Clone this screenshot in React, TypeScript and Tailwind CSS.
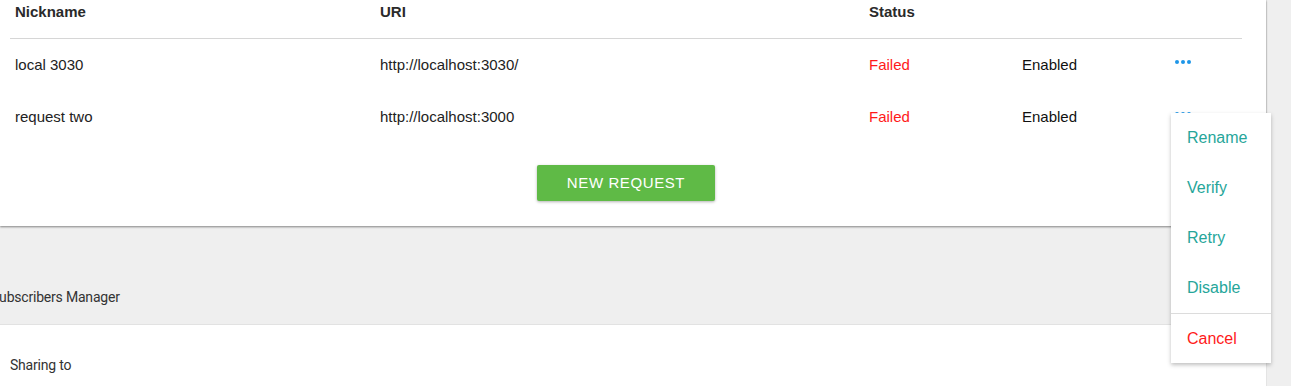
import React from "react";

const rows = [
  { name: "local 3030", uri: "http://localhost:3030/", status: "Failed", state: "Enabled" },
  { name: "request two", uri: "http://localhost:3000", status: "Failed", state: "Enabled" },
];

function Dots() {
  return (
    <div className="flex gap-[2px] items-center h-[6px]">
      <span className="w-[4px] h-[4px] rounded-full bg-[#1e96e8]" />
      <span className="w-[4px] h-[4px] rounded-full bg-[#1e96e8]" />
      <span className="w-[4px] h-[4px] rounded-full bg-[#1e96e8]" />
    </div>
  );
}

export default function App() {
  const cols = "grid grid-cols-[365px_489px_153px_153px_72px]";
  return (
    <div className="relative flex h-[386px] w-[1291px] overflow-hidden bg-white text-[15px] text-[#222]" style={{ fontFamily: '"Liberation Sans", Arial, sans-serif' }}>
      <div className="flex w-[1266px] flex-col">
        <div className="relative z-10 h-[226px] bg-white shadow-[0_1px_2px_rgba(0,0,0,0.45)]">
          <div className="ml-[10px] w-[1232px]">
            <div className={`${cols} h-[39px] border-b border-[#d6d6d6] pt-[3px] font-bold text-[#2a2a2a]`}>
              <div className="px-[5px] leading-[18px]">Nickname</div>
              <div className="px-[5px] leading-[18px]">URI</div>
              <div className="px-[5px] leading-[18px]">Status</div>
              <div />
              <div />
            </div>
            {rows.map((r) => (
              <div key={r.name} className={`${cols} h-[52px] items-center`}>
                <div className="px-[5px] pt-[1px]">{r.name}</div>
                <div className="px-[5px] pt-[1px]">{r.uri}</div>
                <div className="px-[5px] pt-[1px] text-[#ff1a1a]">{r.status}</div>
                <div className="px-[5px] pt-[1px] text-[#111]">{r.state}</div>
                <div className="px-[5px] pb-[7px]">
                  <Dots />
                </div>
              </div>
            ))}
            <div className="flex justify-center pt-[22px]">
              <button className="h-[36px] w-[178px] rounded-[2px] bg-[#5fba46] text-[15px] tracking-[0.6px] text-white shadow-[0_1px_3px_rgba(0,0,0,0.3)]">
                NEW REQUEST
              </button>
            </div>
          </div>
        </div>
        <div className="flex h-[99px] items-end border-b border-[#e2e2e2] bg-[#efefef] pb-[16px]">
          <span className="-ml-[9px] text-[14px] tracking-[-0.2px] text-[#333]" style={{ fontFamily: 'Roboto, "Liberation Sans", sans-serif' }}>
            Subscribers Manager
          </span>
        </div>
        <div className="flex-1 bg-white pl-[10px] pt-[29px]">
          <span className="text-[14px] tracking-[-0.2px] text-[#333]" style={{ fontFamily: 'Roboto, "Liberation Sans", sans-serif' }}>
            Sharing to
          </span>
        </div>
      </div>
      <div className="flex-1 border-l border-[#e4e4e4] bg-[#efefef]" />

      <div className="absolute left-[1171px] top-[113px] z-20 w-[100px] bg-white text-[16px] shadow-[0_2px_4px_rgba(0,0,0,0.25)]">
        {["Rename", "Verify", "Retry", "Disable"].map((t) => (
          <div key={t} className="flex h-[50px] items-center px-[16px] text-[#26a69a]">
            {t}
          </div>
        ))}
        <div className="h-[1px] bg-[#dcdcdc]" />
        <div className="flex h-[49px] items-center px-[16px] text-[#ff1a1a]">Cancel</div>
      </div>
    </div>
  );
}
